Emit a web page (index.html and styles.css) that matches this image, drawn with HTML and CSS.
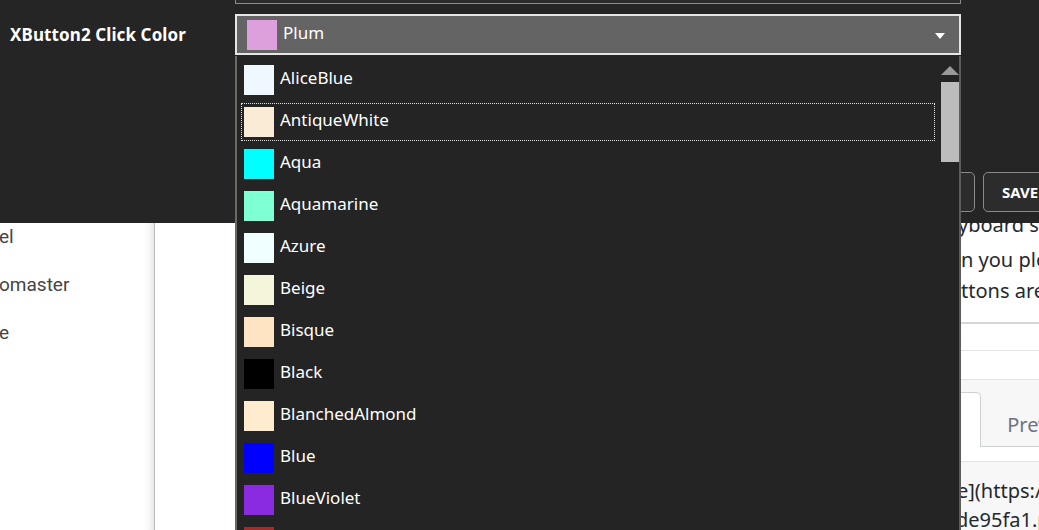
FILE: index.html
```html
<!DOCTYPE html>
<html>
<head>
<meta charset="utf-8">
<link rel="stylesheet" href="styles.css">
</head>
<body>
<div class="page">
  <aside class="sidebar">
    <div class="nav-item">el</div>
    <div class="nav-item">omaster</div>
    <div class="nav-item">e</div>
  </aside>
  <main class="main">
    <div class="doc">
      <p class="txt l1">yboard s</p>
      <p class="txt l2">n you ple</p>
      <p class="txt l3">ttons are</p>
      <hr class="rule">
      <div class="editor">
        <div class="editor-bar"></div>
        <div class="tabs">
          <div class="tab active"></div>
          <div class="tab">Preview</div>
        </div>
        <div class="editor-gap"></div>
        <div class="editor-body">
          <p class="txt b1">e](https://</p>
          <p class="txt b2">de95fa1.png</p>
        </div>
      </div>
    </div>
  </main>
</div>

<div class="panel">
  <div class="row">
    <div class="label">XButton2 Click Color</div>
    <div class="field">
      <div class="prev-input"></div>
      <div class="select">
        <span class="swatch" style="background:#DDA0DD"></span>
        <span class="sel-text">Plum</span>
        <span class="caret"></span>
        <div class="dropdown">
          <div class="items">
            <div class="item"><span class="swatch" style="background:#F0F8FF"></span><span class="name">AliceBlue</span></div>
            <div class="item focused"><span class="swatch" style="background:#FAEBD7"></span><span class="name">AntiqueWhite</span></div>
            <div class="item"><span class="swatch" style="background:#00FFFF"></span><span class="name">Aqua</span></div>
            <div class="item"><span class="swatch" style="background:#7FFFD4"></span><span class="name">Aquamarine</span></div>
            <div class="item"><span class="swatch" style="background:#F0FFFF"></span><span class="name">Azure</span></div>
            <div class="item"><span class="swatch" style="background:#F5F5DC"></span><span class="name">Beige</span></div>
            <div class="item"><span class="swatch" style="background:#FFE4C4"></span><span class="name">Bisque</span></div>
            <div class="item"><span class="swatch" style="background:#000000"></span><span class="name">Black</span></div>
            <div class="item"><span class="swatch" style="background:#FFEBCD"></span><span class="name">BlanchedAlmond</span></div>
            <div class="item"><span class="swatch" style="background:#0000FF"></span><span class="name">Blue</span></div>
            <div class="item"><span class="swatch" style="background:#8A2BE2"></span><span class="name">BlueViolet</span></div>
            <div class="item"><span class="swatch" style="background:#A52A2A"></span><span class="name">Brown</span></div>
          </div>
          <div class="scrollbar">
            <span class="sb-up"></span>
            <span class="sb-thumb"></span>
          </div>
        </div>
      </div>
    </div>
  </div>
  <div class="actions">
    <button class="btn">CANCEL</button>
    <button class="btn">SAVE</button>
  </div>
</div>
</body>
</html>
```

FILE: styles.css
```css
html, body {
  margin: 0;
  padding: 0;
}
body {
  width: 1039px;
  height: 530px;
  overflow: hidden;
  position: relative;
  background: #ffffff;
  font-family: "Noto Sans", "Open Sans", sans-serif;
}

/* ---------- page underneath ---------- */
.page {
  display: flex;
  height: 530px;
}
.sidebar {
  width: 154px;
  flex: none;
  border-right: 1px solid #b9b9b9;
  box-shadow: inset -12px 0 12px -12px rgba(0, 0, 0, 0.18);
  padding-top: 213px;
  overflow: hidden;
}
.nav-item {
  height: 48px;
  line-height: 48px;
  font-family: Roboto, "Liberation Sans", sans-serif;
  font-size: 19px;
  color: #444444;
  margin-left: -1px;
  white-space: nowrap;
}
.main {
  flex: 1;
  overflow: hidden;
}
.doc {
  margin-left: 805px;
  padding-top: 209px;
  width: 120px;
}
.txt {
  margin: 0;
  font-size: 20px;
  line-height: 31px;
  color: #24292e;
  white-space: nowrap;
}
.l1 { margin-left: -2px; }
.l2 { margin-left: 1px; margin-top: 4px; }
.l3 { margin-left: 1px; }
.rule {
  margin: 16px 0 0;
  border: 0;
  border-top: 2px solid #d6d6d6;
  height: 0;
}
.editor {
  margin-top: 26px;
  border-top: 1px solid #e1e3e5;
}
.editor-bar {
  height: 28px;
  background: #ffffff;
  border-bottom: 1px solid #e1e3e5;
}
.tabs {
  display: flex;
  align-items: flex-end;
  background: #f7f7f8;
  padding-top: 12px;
  border-bottom: 1px solid #cfd2d5;
  height: 54px;
}
.tab {
  height: 54px;
  box-sizing: border-box;
  font-size: 20px;
  line-height: 54px;
  padding-top: 6px;
  color: #6c757d;
  padding-left: 26px;
  white-space: nowrap;
}
.tab.active {
  width: 23px;
  padding: 0;
  background: #ffffff;
  border: 1px solid #cfd2d5;
  border-left: 0;
  border-bottom: 0;
  border-radius: 0 5px 0 0;
  margin-bottom: -1px;
  height: 55px;
}
.editor-gap {
  height: 14px;
  background: #ffffff;
  border-bottom: 1px solid #e1e3e5;
}
.editor-body {
  background: #f7f7f8;
  padding-top: 14px;
  height: 100px;
}
.editor-body .txt { line-height: 29px; }
.b1 { margin-left: -3px; }
.b2 { margin-left: -4px; }

/* ---------- dark settings panel ---------- */
.panel {
  position: absolute;
  top: 0;
  left: 0;
  width: 1039px;
  height: 223px;
  background: #252525;
  font-family: "Noto Sans", "Open Sans", sans-serif;
}
.row {
  display: flex;
}
.label {
  width: 235px;
  flex: none;
  box-sizing: border-box;
  padding: 23px 0 0 10px;
  color: #ffffff;
  font-weight: 700;
  font-size: 17px;
  line-height: 24px;
  letter-spacing: 0.1px;
  white-space: nowrap;
}
.field {
  width: 726px;
  flex: none;
}
.prev-input {
  height: 3px;
  border: 1px solid #8c8c8c;
  border-top: 0;
  background: #2b2b2b;
}
.select {
  position: relative;
  margin-top: 10px;
  height: 41px;
  box-sizing: border-box;
  border: 2px solid #e6e6e6;
  background: #646464;
  display: flex;
  align-items: center;
  padding-left: 10px;
}
.swatch {
  width: 30px;
  height: 30px;
  flex: none;
  display: inline-block;
}
.sel-text {
  margin-left: 6px;
  color: #ffffff;
  font-size: 17px;
  flex: 1;
  padding-bottom: 4px;
}
.caret {
  width: 0;
  height: 0;
  border-left: 5px solid transparent;
  border-right: 5px solid transparent;
  border-top: 6px solid #ffffff;
  margin-right: 14px;
  margin-top: 2px;
}

.dropdown {
  position: absolute;
  left: -2px;
  top: 40px;
  width: 726px;
  height: 480px;
  box-sizing: border-box;
  background: #242424;
  border-left: 2px solid #6d6a66;
  border-right: 2px solid #5e5b58;
  display: flex;
  overflow: hidden;
}
.items {
  flex: 1;
  padding: 3px 0 0 2px;
}
.item {
  height: 42px;
  display: flex;
  align-items: center;
  gap: 6px;
  padding-left: 5px;
  margin-right: 4px;
  color: #ffffff;
  font-size: 17px;
  white-space: nowrap;
}
.name {
  padding-bottom: 6px;
}
.item.focused {
  outline: 1px dotted #e0e0e0;
  outline-offset: -3px;
}
.scrollbar {
  width: 18px;
  flex: none;
  display: flex;
  flex-direction: column;
  align-items: center;
  padding-top: 10px;
}
.sb-up {
  width: 0;
  height: 0;
  border-left: 9px solid transparent;
  border-right: 9px solid transparent;
  border-bottom: 9px solid #9a9a9a;
}
.sb-thumb {
  margin-top: 7px;
  width: 18px;
  height: 80px;
  background: #bcbcbc;
}

.actions {
  display: flex;
  gap: 8px;
  margin-top: 117px;
  padding-left: 875px;
}
.btn {
  flex: none;
  height: 40px;
  box-sizing: border-box;
  border: 1px solid #8a8a8a;
  border-radius: 5px;
  background: #2c2c2c;
  color: #ffffff;
  font-family: "Noto Sans", "Open Sans", sans-serif;
  font-weight: 700;
  font-size: 15px;
  padding: 0 18px;
  width: 100px;
  text-align: left;
}
```
